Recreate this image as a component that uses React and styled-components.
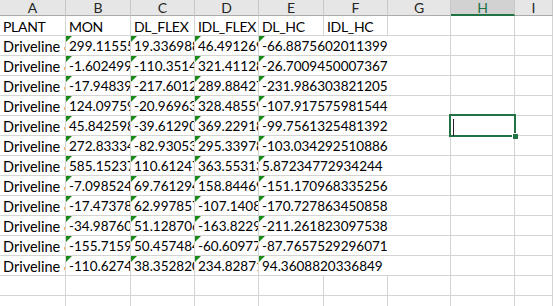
import React from "react";
import styled, { createGlobalStyle } from "styled-components";

const COLORS = {
  grid: "#d4d4d4",
  headerBg: "#e6e6e6",
  headerLine: "#c8c8c8",
  headerBottom: "#ababab",
  headerText: "#262626",
  selectedHeader: "#d2d2d2",
  green: "#217346",
  flag: "#1a8a1a",
  text: "#000000",
};

const COLUMNS = ["A", "B", "C", "D", "E", "F", "G", "H", "I"];
const SELECTED_COL = "H";
const SELECTED_ROW = 5; // H6, counted from the PLANT row

const TITLES = ["PLANT", "MON", "DL_FLEX", "IDL_FLEX", "DL_HC", "IDL_HC"];

const DATA = [
  ["299.115557412", "19.3369884571", "46.4912693214", "-66.8875602011399"],
  ["-1.60249923418", "-110.351463284", "321.411281095", "-26.7009450007367"],
  ["-17.9483984127", "-217.601283746", "289.884271365", "-231.986303821205"],
  ["124.097596217", "-20.9696351284", "328.485591736", "-107.917575981544"],
  ["45.8425987126", "-39.6129083374", "369.229183465", "-99.7561325481392"],
  ["272.833346512", "-82.9305381245", "295.339781264", "-103.034292510886"],
  ["585.152371842", "110.612471935", "363.553131874", "5.87234772934244"],
  ["-7.09852439812", "69.7612941127", "158.844693725", "-151.170968335256"],
  ["-17.4737841562", "62.9978571432", "-107.140872614", "-170.727863450858"],
  ["-34.9876091872", "51.1287064215", "-163.822971235", "-211.261823097538"],
  ["-155.715921837", "50.4574841293", "-60.6097713846", "-87.7657529296071"],
  ["-110.627401934", "38.3528203817", "234.828719236", "94.3608820336849"],
];

const EMPTY_ROWS = 2;

const GlobalStyle = createGlobalStyle`
  html, body {
    margin: 0;
    padding: 0;
    background: #ffffff;
    overflow: hidden;
  }
`;

const Sheet = styled.div`
  display: grid;
  grid-template-columns: 66px 65px 64px 64px 65px 64px 63px 64px 1fr;
  grid-auto-rows: 20px;
  grid-template-rows: 16px;
  width: 553px;
  height: 306px;
  overflow: hidden;
  font-family: Lato, "Liberation Sans", sans-serif;
  font-size: 14.5px;
  color: ${COLORS.text};
`;

const ColHeader = styled.div`
  box-sizing: border-box;
  display: flex;
  align-items: center;
  justify-content: center;
  background: ${(p) => (p.$selected ? COLORS.selectedHeader : COLORS.headerBg)};
  border-right: 1px solid ${COLORS.headerLine};
  border-bottom: ${(p) =>
    p.$selected ? `2px solid ${COLORS.green}` : `1px solid ${COLORS.headerBottom}`};
  color: ${(p) => (p.$selected ? COLORS.green : COLORS.headerText)};
  font-size: 14px;
  line-height: 15px;
  padding-top: ${(p) => (p.$selected ? "1px" : "0")};
`;

const Cell = styled.div`
  position: relative;
  box-sizing: border-box;
  border-right: ${(p) => (p.$noRight ? "none" : `1px solid ${COLORS.grid}`)};
  border-bottom: 1px solid ${COLORS.grid};
  grid-column: ${(p) => (p.$span ? `span ${p.$span}` : "auto")};
  padding: 0 0 0 3px;
  white-space: nowrap;
  overflow: hidden;
  line-height: 21px;
  font-size: ${(p) => (p.$num ? "13.5px" : "inherit")};

  ${(p) =>
    p.$flag &&
    `
    &::before {
      content: "";
      position: absolute;
      top: 0;
      left: 0;
      border-top: 6px solid ${COLORS.flag};
      border-right: 6px solid transparent;
    }
  `}
`;

const TitleCell = styled(Cell)`
  font-size: 14px;
  letter-spacing: -0.3px;
`;

const LabelCell = styled(Cell)`
  &::after {
    content: "";
    position: absolute;
    right: 0;
    top: 11px;
    width: 1px;
    height: 3px;
    background: #f3b46a;
  }
`;

const SelectedCell = styled(Cell)`
  overflow: visible;
  z-index: 2;
`;

const Selection = styled.div`
  position: absolute;
  top: -2px;
  left: -2px;
  right: -2px;
  bottom: -2px;
  border: 2px solid ${COLORS.green};
  pointer-events: none;
`;

const FillHandle = styled.div`
  position: absolute;
  right: -4px;
  bottom: -4px;
  width: 5px;
  height: 5px;
  background: ${COLORS.green};
  border-left: 1px solid #ffffff;
  border-top: 1px solid #ffffff;
`;

const Caret = styled.div`
  position: absolute;
  left: 2px;
  top: 3px;
  width: 1px;
  height: 17px;
  background: #222;
`;

const blankCells = (from, rowIndex) =>
  COLUMNS.slice(from).map((col) =>
    col === SELECTED_COL && rowIndex === SELECTED_ROW ? (
      <SelectedCell key={col}>
        <Selection>
          <Caret />
          <FillHandle />
        </Selection>
      </SelectedCell>
    ) : (
      <Cell key={col} />
    )
  );

export default function App() {
  return (
    <>
      <GlobalStyle />
      <Sheet>
        {COLUMNS.map((col) => (
          <ColHeader key={col} $selected={col === SELECTED_COL}>
            {col}
          </ColHeader>
        ))}

        {TITLES.map((t) => (
          <TitleCell key={t}>{t}</TitleCell>
        ))}
        {blankCells(TITLES.length, 0)}

        {DATA.map((row, i) => (
          <React.Fragment key={i}>
            <LabelCell>Driveline</LabelCell>
            {row.map((value, j) => (
              <Cell
                key={j}
                $num
                $flag
                $span={j === row.length - 1 ? 2 : undefined}
                $noRight={j === row.length - 1}
              >
                {value}
              </Cell>
            ))}
            {blankCells(6, i + 1)}
          </React.Fragment>
        ))}

        {Array.from({ length: EMPTY_ROWS }).map((_, i) => (
          <React.Fragment key={`e${i}`}>{blankCells(0, DATA.length + 1 + i)}</React.Fragment>
        ))}
      </Sheet>
    </>
  );
}
